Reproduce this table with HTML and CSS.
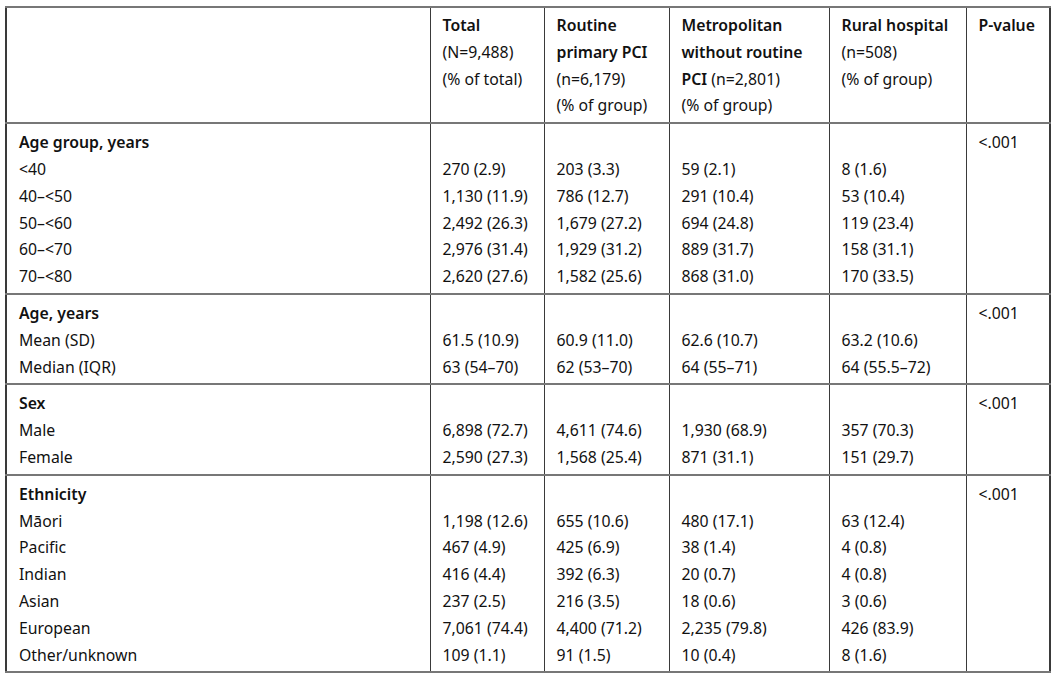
FILE: index.html
```html
<!DOCTYPE html>
<html>
<head>
<meta charset="utf-8">
<link rel="stylesheet" href="styles.css">
</head>
<body>
<table class="tbl">
  <colgroup>
    <col class="c1"><col class="c2"><col class="c3"><col class="c4"><col class="c5"><col class="c6">
  </colgroup>
  <thead>
    <tr>
      <th></th>
      <th><b>Total</b><br>(N=9,488)<br>(% of total)</th>
      <th><b>Routine<br>primary PCI</b><br>(n=6,179)<br>(% of group)</th>
      <th><b>Metropolitan<br>without routine<br>PCI</b> (n=2,801)<br>(% of group)</th>
      <th><b>Rural hospital</b><br>(n=508)<br>(% of group)</th>
      <th><b>P-value</b></th>
    </tr>
  </thead>
  <tbody>
    <tr>
      <td><b>Age group, years</b><br>&lt;40<br>40–&lt;50<br>50–&lt;60<br>60–&lt;70<br>70–&lt;80</td>
      <td>&nbsp;<br>270 (2.9)<br>1,130 (11.9)<br>2,492 (26.3)<br>2,976 (31.4)<br>2,620 (27.6)</td>
      <td>&nbsp;<br>203 (3.3)<br>786 (12.7)<br>1,679 (27.2)<br>1,929 (31.2)<br>1,582 (25.6)</td>
      <td>&nbsp;<br>59 (2.1)<br>291 (10.4)<br>694 (24.8)<br>889 (31.7)<br>868 (31.0)</td>
      <td>&nbsp;<br>8 (1.6)<br>53 (10.4)<br>119 (23.4)<br>158 (31.1)<br>170 (33.5)</td>
      <td>&lt;.001</td>
    </tr>
    <tr>
      <td><b>Age, years</b><br>Mean (SD)<br>Median (IQR)</td>
      <td>&nbsp;<br>61.5 (10.9)<br>63 (54–70)</td>
      <td>&nbsp;<br>60.9 (11.0)<br>62 (53–70)</td>
      <td>&nbsp;<br>62.6 (10.7)<br>64 (55–71)</td>
      <td>&nbsp;<br>63.2 (10.6)<br>64 (55.5–72)</td>
      <td>&lt;.001</td>
    </tr>
    <tr>
      <td><b>Sex</b><br>Male<br>Female</td>
      <td>&nbsp;<br>6,898 (72.7)<br>2,590 (27.3)</td>
      <td>&nbsp;<br>4,611 (74.6)<br>1,568 (25.4)</td>
      <td>&nbsp;<br>1,930 (68.9)<br>871 (31.1)</td>
      <td>&nbsp;<br>357 (70.3)<br>151 (29.7)</td>
      <td>&lt;.001</td>
    </tr>
    <tr>
      <td><b>Ethnicity</b><br>Māori<br>Pacific<br>Indian<br>Asian<br>European<br>Other/unknown</td>
      <td>&nbsp;<br>1,198 (12.6)<br>467 (4.9)<br>416 (4.4)<br>237 (2.5)<br>7,061 (74.4)<br>109 (1.1)</td>
      <td>&nbsp;<br>655 (10.6)<br>425 (6.9)<br>392 (6.3)<br>216 (3.5)<br>4,400 (71.2)<br>91 (1.5)</td>
      <td>&nbsp;<br>480 (17.1)<br>38 (1.4)<br>20 (0.7)<br>18 (0.6)<br>2,235 (79.8)<br>10 (0.4)</td>
      <td>&nbsp;<br>63 (12.4)<br>4 (0.8)<br>4 (0.8)<br>3 (0.6)<br>426 (83.9)<br>8 (1.6)</td>
      <td>&lt;.001</td>
    </tr>
  </tbody>
</table>
</body>
</html>
```
FILE: styles.css
```css
html, body {
  margin: 0;
  padding: 0;
  background: #fff;
}
body {
  padding: 6px 7px 0 5px;
  font-family: "Noto Sans", "Open Sans", sans-serif;
  font-size: 15.8px;
  line-height: 26.8px;
  color: #111;
}
.tbl {
  border-collapse: collapse;
  table-layout: fixed;
  width: 1044px;
  border: 2px solid #3a3a3a;
}
.c1 { width: 424px; }
.c2 { width: 114px; }
.c3 { width: 125px; }
.c4 { width: 160px; }
.c5 { width: 137px; }
.c6 { width: 84px; }
.tbl th, .tbl td {
  border-left: 1px solid #3a3a3a;
  border-right: 1px solid #3a3a3a;
  border-top: 2px solid #777;
  border-bottom: 2px solid #777;
  padding: 5px 12px 3px 12px;
  vertical-align: top;
  text-align: left;
  font-weight: 400;
  white-space: nowrap;
}
.tbl thead th {
  padding-top: 4px;
}
.tbl b {
  font-weight: 600;
}
```
